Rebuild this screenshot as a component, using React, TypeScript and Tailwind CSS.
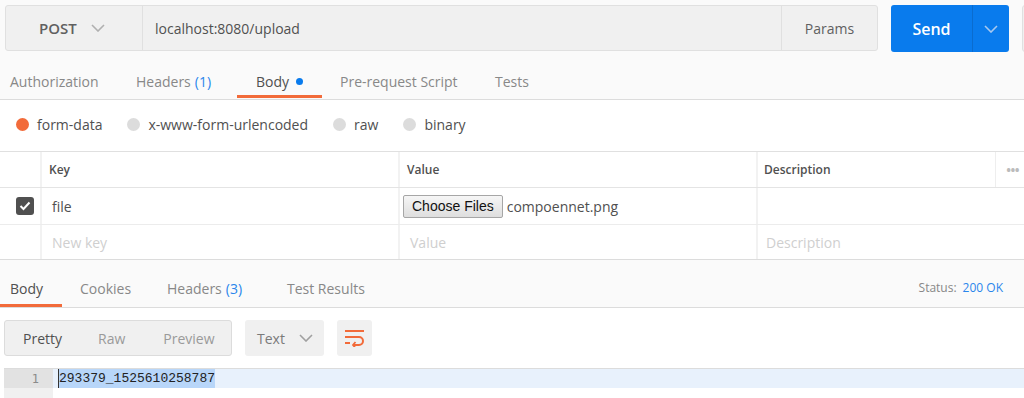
import React from "react";

const Chevron = ({ className = "", color = "#9a9a9a" }: { className?: string; color?: string }) => (
  <svg className={className} width="14" height="8" viewBox="0 0 14 8" fill="none">
    <polyline points="1,1 7,7 13,1" stroke={color} strokeWidth="1.6" fill="none" />
  </svg>
);

const Radio = ({ on = false }: { on?: boolean }) => (
  <span
    className={`inline-block w-[13px] h-[13px] rounded-full ${
      on ? "bg-[#f26b3a]" : "bg-[#dcdcdc]"
    }`}
  />
);

export default function App() {
  return (
    <div className="w-[1024px] h-[398px] overflow-hidden bg-white font-['Open_Sans',sans-serif] text-[14px] text-[#505050]">
      {/* top section */}
      <div className="bg-[#fafafa]">
        <div className="flex pt-[5px] pl-[5px] h-[52px] overflow-hidden">
          <div className="flex shrink-0 w-[873px] h-[46px] rounded-[3px] border border-[#e0e0e0] bg-[#f0f0f0]">
            <div className="w-[137px] shrink-0 flex items-center pl-[33px] gap-[14px] border-r border-[#e0e0e0]">
              <span className="font-semibold text-[15px] text-[#606060]">POST</span>
              <Chevron color="#b0b0b0" />
            </div>
            <div className="flex-1 flex items-center pl-[12px] text-[#505050]">
              localhost:8080/upload
            </div>
            <div className="w-[96px] shrink-0 flex items-center justify-center border-l border-[#e0e0e0] text-[#606060]">
              Params
            </div>
          </div>
          <div className="ml-[13px] shrink-0 flex w-[118px] h-[47px] rounded-[3px] bg-[#097bed] overflow-hidden">
            <div className="w-[82px] flex items-center justify-center text-white font-semibold text-[16px] border-r border-[#0a6ccf]">
              Send
            </div>
            <div className="flex-1 flex items-center justify-center">
              <Chevron color="#a8c8ef" />
            </div>
          </div>
          <div className="ml-[13px] shrink-0 w-[20px] h-[47px] rounded-[3px] border border-[#e0e0e0] bg-[#f0f0f0]" />
        </div>
        <div className="flex h-[48px] border-b border-[#dcdcdc] text-[#888888]">
          <div className="w-[118px] flex items-center pl-[10px] pt-[11px]">Authorization</div>
          <div className="w-[119px] flex items-center pl-[18px] pt-[11px]">
            Headers <span className="ml-[4px] text-[#2a86ec]">(1)</span>
          </div>
          <div className="relative w-[85px] flex items-center pl-[19px] pt-[11px] text-[#505050]">
            Body
            <span className="ml-[7px] w-[7px] h-[7px] rounded-full bg-[#097bed]" />
            <span className="absolute left-0 right-0 bottom-[1px] h-[3px] bg-[#f26b3a]" />
          </div>
          <div className="w-[154px] flex items-center pl-[18px] pt-[11px]">Pre-request Script</div>
          <div className="flex items-center pl-[19px] pt-[11px]">Tests</div>
        </div>
      </div>

      {/* body type radios */}
      <div className="flex items-center h-[51px] pl-[16px] pb-[2px] text-[#505050]">
        <div className="flex items-center gap-[8px]">
          <Radio on />
          <span>form-data</span>
        </div>
        <div className="flex items-center gap-[8px] ml-[25px]">
          <Radio />
          <span>x-www-form-urlencoded</span>
        </div>
        <div className="flex items-center gap-[8px] ml-[25px]">
          <Radio />
          <span>raw</span>
        </div>
        <div className="flex items-center gap-[8px] ml-[25px]">
          <Radio />
          <span>binary</span>
        </div>
      </div>

      {/* table */}
      <div className="border-t border-[#e0e0e0]">
        <div className="flex h-[36px] border-b border-[#e4e4e4] text-[12px] font-semibold text-[#505050]">
          <div className="w-[42px] shrink-0 border-r-2 border-[#f2f2f2]" />
          <div className="w-[358px] shrink-0 flex items-center pl-[7px] border-r-2 border-[#f2f2f2]">Key</div>
          <div className="w-[358px] shrink-0 flex items-center pl-[7px] border-r-2 border-[#f2f2f2]">Value</div>
          <div className="w-[238px] shrink-0 flex items-center pl-[6px] border-r border-[#eeeeee]">Description</div>
          <div className="flex-1 flex items-center pl-[10px] text-[#bbbbbb] tracking-[-1px] text-[14px]">•••</div>
        </div>
        <div className="flex h-[37px] border-b border-[#ececec]">
          <div className="w-[42px] shrink-0 flex items-center justify-end pr-[6px] border-r-2 border-[#f2f2f2]">
            <span className="w-[18px] h-[18px] rounded-[3px] bg-[#505050] flex items-center justify-center">
              <svg width="12" height="10" viewBox="0 0 12 10" fill="none">
                <polyline points="1.5,5 4.5,8 10.5,1.5" stroke="#ffffff" strokeWidth="2" fill="none" />
              </svg>
            </span>
          </div>
          <div className="w-[358px] shrink-0 flex items-center pl-[10px] border-r-2 border-[#f2f2f2]">file</div>
          <div className="w-[358px] shrink-0 flex items-center pl-[3px] border-r-2 border-[#f2f2f2]">
            <span className="h-[23px] px-[8px] flex items-center rounded-[2px] border border-[#a6a6a6] bg-gradient-to-b from-[#f6f6f6] to-[#dedede] font-['Liberation_Sans',sans-serif] text-[14px] text-[#111]">
              Choose Files
            </span>
            <span className="ml-[4px] text-[#505050]">compoennet.png</span>
          </div>
          <div className="flex-1" />
        </div>
        <div className="flex h-[35px] border-b border-[#dcdcdc] text-[#cfcfcf]">
          <div className="w-[42px] shrink-0 border-r-2 border-[#f2f2f2]" />
          <div className="w-[358px] shrink-0 flex items-center pl-[10px] border-r-2 border-[#f2f2f2]">New key</div>
          <div className="w-[358px] shrink-0 flex items-center pl-[10px] border-r-2 border-[#f2f2f2]">Value</div>
          <div className="flex-1 flex items-center pl-[8px]">Description</div>
        </div>
      </div>

      {/* response tabs */}
      <div className="bg-[#fafafa] flex h-[48px] border-b border-[#dcdcdc] text-[#888888]">
        <div className="relative w-[62px] flex items-center pl-[10px] pt-[9px] text-[#505050]">
          Body
          <span className="absolute left-0 right-0 bottom-0 h-[3px] bg-[#f26b3a]" />
        </div>
        <div className="w-[87px] flex items-center pl-[18px] pt-[9px]">Cookies</div>
        <div className="w-[120px] flex items-center pl-[18px] pt-[9px]">
          Headers <span className="ml-[4px] text-[#2a86ec]">(3)</span>
        </div>
        <div className="flex items-center pl-[18px] pt-[9px]">Test Results</div>
        <div className="ml-auto flex items-center pt-[9px] pr-[21px] text-[12px]">
          <span className="text-[#888888]">Status:</span>
          <span className="ml-[6px] text-[#2a86ec]">200 OK</span>
        </div>
      </div>

      {/* response toolbar */}
      <div className="flex items-center pt-[12px] pl-[4px] h-[48px]">
        <div className="flex items-center w-[228px] h-[36px] rounded-[3px] border border-[#dcdcdc] bg-[#f0f0f0]">
          <span className="pl-[18px] text-[#505050]">Pretty</span>
          <span className="pl-[36px] text-[#9a9a9a]">Raw</span>
          <span className="pl-[38px] text-[#9a9a9a]">Preview</span>
        </div>
        <div className="ml-[13px] w-[79px] h-[36px] rounded-[3px] bg-[#f0f0f0] flex items-center pl-[12px] gap-[14px] text-[#7a7a7a]">
          <span>Text</span>
          <Chevron color="#a0a0a0" />
        </div>
        <div className="ml-[13px] w-[35px] h-[36px] rounded-[3px] bg-[#f0f0f0] flex items-center justify-center">
          <svg width="22" height="18" viewBox="0 0 22 18" fill="none">
            <line x1="1" y1="2" x2="20" y2="2" stroke="#f26b3a" strokeWidth="2" />
            <path d="M1 8 H15 A4 4 0 0 1 15 16 H9" stroke="#f26b3a" strokeWidth="2" fill="none" />
            <line x1="1" y1="14" x2="6" y2="14" stroke="#f26b3a" strokeWidth="2" />
            <polyline points="11.5,13 9,16 11.5,19" stroke="#f26b3a" strokeWidth="1.8" fill="none" />
          </svg>
        </div>
      </div>

      {/* code editor */}
      <div className="mt-[12px] ml-[4px] border-t border-[#dcdcdc]">
        <div className="flex h-[19px] bg-[#e8f1fc]">
          <div className="w-[49px] bg-[#e2e2e2] flex items-center justify-end pr-[14px] font-['DejaVu_Sans_Mono',monospace] text-[12px] text-[#8a8a8a]">
            1
          </div>
          <div className="pl-[5px] flex items-center">
            <span className="bg-[#b8d6f9] font-['Liberation_Mono',monospace] text-[13px] leading-[19px] text-[#222] border-l border-[#333]">
              293379_1525610258787
            </span>
          </div>
        </div>
        <div className="flex h-[20px]">
          <div className="w-[49px] bg-[#f0f0f0]" />
        </div>
      </div>
    </div>
  );
}
